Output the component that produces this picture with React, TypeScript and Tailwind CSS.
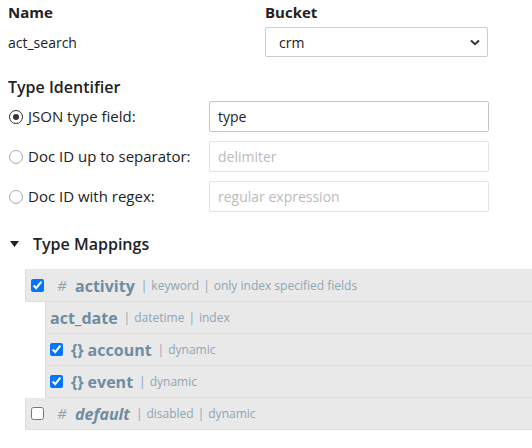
import React from 'react'

interface Mapping {
  name: string
  icon?: string
  meta: string
  checked?: boolean
  italic?: boolean
}

const children: Mapping[] = [
  { name: 'act_date', meta: 'datetime | index' },
  { name: 'account', icon: '{}', meta: 'dynamic', checked: true },
  { name: 'event', icon: '{}', meta: 'dynamic', checked: true },
]

const Radio = ({ checked }: { checked?: boolean }) => (
  <span
    className={`flex h-[14px] w-[14px] shrink-0 items-center justify-center rounded-full border ${
      checked ? 'border-[#333] border-[1.5px]' : 'border-[#aaa]'
    }`}
  >
    {checked && <span className='h-[6px] w-[6px] rounded-full bg-[#333]' />}
  </span>
)

const Row = ({ m, indent }: { m: Mapping; indent?: boolean }) => (
  <div className='flex h-[32px] items-center border-b border-l border-[#d6dee6] bg-[#e9e9e9] text-[#6f8ca1]'>
    {m.icon === undefined && indent ? (
      <span className='ml-[4px]' />
    ) : (
      <input
        type='checkbox'
        defaultChecked={m.checked}
        className={`h-[13px] w-[13px] ${indent ? 'ml-[4px]' : 'ml-[5px]'}`}
      />
    )}
    {m.icon === '#' && <span className='ml-[13px] w-[18px] text-[15px] italic text-[#8ea3b3]'>#</span>}
    {m.icon === '{}' && <span className='ml-[8px] mr-[4px] text-[16px] font-bold'>{'{}'}</span>}
    <span className={`text-[16px] font-bold ${m.italic ? 'italic' : ''}`}>{m.name}</span>
    <span className='ml-[6px] text-[12px] text-[#8ea6b6]'>
      <span className='mr-[4px]'>|</span>
      {m.meta.split(' | ').map((part, i) => (
        <span key={i}>
          {i > 0 && <span className='mx-[4px]'>|</span>}
          {part}
        </span>
      ))}
    </span>
  </div>
)

const App: React.FC = () => {
  const fields = [
    { label: 'JSON type field:', value: 'type', checked: true },
    { label: 'Doc ID up to separator:', placeholder: 'delimiter' },
    { label: 'Doc ID with regex:', placeholder: 'regular expression' },
  ]

  return (
    <div className='w-[532px] bg-white px-[8px] pt-[1px] text-[#222]' style={{ fontFamily: '"Open Sans", sans-serif' }}>
      <div className='flex'>
        <div className='w-[257px]'>
          <div className='h-[26px] text-[15px] font-bold leading-[22px]'>Name</div>
          <div className='flex h-[30px] items-center text-[14px]'>act_search</div>
        </div>
        <div>
          <div className='h-[26px] text-[15px] font-bold leading-[22px]'>Bucket</div>
          <div className='relative h-[30px] w-[223px]'>
            <select className='h-full w-full appearance-none rounded-[2px] border border-[#ccc] bg-white pl-[13px] text-[14px] text-[#222] outline-none'>
              <option>crm</option>
            </select>
            <svg className='pointer-events-none absolute right-[8px] top-[12px]' width='10' height='7' viewBox='0 0 10 7'>
              <path d='M1 1.5 L5 5.2 L9 1.5' fill='none' stroke='#333' strokeWidth='2' />
            </svg>
          </div>
        </div>
      </div>

      <div className='mt-[19px] text-[16px] font-semibold leading-[22px]'>Type Identifier</div>
      <div className='mt-[3px] flex flex-col gap-[9px]'>
        {fields.map((f) => (
          <div key={f.label} className='flex items-center'>
            <div className='flex w-[201px] items-center gap-[5px] pl-[1px] text-[15px]'>
              <Radio checked={f.checked} />
              <span>{f.label}</span>
            </div>
            <input
              defaultValue={f.value}
              placeholder={f.placeholder}
              className={`h-[31px] w-[280px] rounded-[2px] border px-[8px] text-[14px] text-[#222] outline-none placeholder:text-[#bbb] ${
                f.checked ? 'border-[#c4c4c4]' : 'border-[#e2e2e2]'
              }`}
            />
          </div>
        ))}
      </div>

      <div className='mt-[21px] flex items-center text-[16px] font-semibold leading-[22px]'>
        <svg className='ml-[2px] mr-[14px]' width='9' height='6' viewBox='0 0 9 6'>
          <path d='M0 0 H9 L4.5 6 Z' fill='#222' />
        </svg>
        Type Mappings
      </div>

      <div className='ml-[17px] mt-[14px] -mr-[8px] border-t border-[#e4e8ec]'>
        <Row m={{ name: 'activity', icon: '#', meta: 'keyword | only index specified fields', checked: true }} />
        <div className='ml-[20px]'>
          {children.map((c) => (
            <Row key={c.name} m={c} indent />
          ))}
        </div>
        <Row m={{ name: 'default', icon: '#', meta: 'disabled | dynamic', italic: true }} />
      </div>
    </div>
  )
}

export default App
